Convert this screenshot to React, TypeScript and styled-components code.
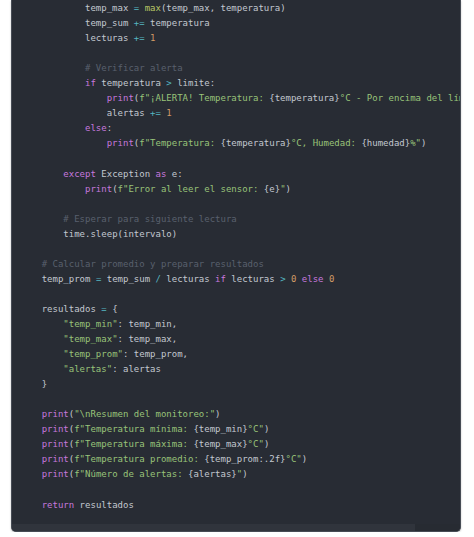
import React from "react";
import styled, { createGlobalStyle } from "styled-components";

const GlobalStyle = createGlobalStyle`
  html, body {
    margin: 0;
    padding: 0;
    background: #ffffff;
  }
`;

type Kind = "t" | "k" | "s" | "n" | "o" | "c" | "f" | "b";

const colors: Record<Kind, string> = {
  t: "#c3c8d0",
  k: "#c678dd",
  s: "#98c379",
  n: "#d19a66",
  o: "#56b6c2",
  c: "#59606d",
  f: "#c678dd",
  b: "#b9c765",
};

const Page = styled.div`
  padding: 0 13px 0 11px;
  width: 450px;
`;

const CodeBlock = styled.div`
  background: #282c34;
  border: 1px solid #474c55;
  border-top: none;
  border-radius: 0 0 5px 5px;
  box-shadow: 0 1px 2px rgba(0, 0, 0, 0.25);
  overflow: hidden;
`;

const Pre = styled.pre`
  margin: 0;
  padding: 1px 0 11px 8px;
  overflow: hidden;
  white-space: pre;
  font-family: "DejaVu Sans Mono", "Liberation Mono", monospace;
  font-size: 9px;
  line-height: 15.06px;
  color: ${colors.t};
`;

const Line = styled.div`
  height: 15.06px;
`;

const Tok = styled.span<{ $kind: Kind }>`
  color: ${(p) => colors[p.$kind]};
`;

const ScrollTrack = styled.div`
  height: 7px;
  background: #272b32;
`;

const ScrollThumb = styled.div<{ $width: string }>`
  height: 100%;
  width: ${(p) => p.$width};
  background: #30343c;
`;

type Seg = [Kind, string];

const ind = (n: number): Seg => ["t", " ".repeat(n)];

const lines: Seg[][] = [
  [ind(12), ["t", "temp_max "], ["o", "="], ["t", " "], ["b", "max"], ["t", "(temp_max, temperatura)"]],
  [ind(12), ["t", "temp_sum "], ["o", "+="], ["t", " temperatura"]],
  [ind(12), ["t", "lecturas "], ["o", "+="], ["t", " "], ["n", "1"]],
  [],
  [ind(12), ["c", "# Verificar alerta"]],
  [ind(12), ["k", "if"], ["t", " temperatura "], ["o", ">"], ["t", " limite:"]],
  [
    ind(16),
    ["f", "print"],
    ["t", "("],
    ["s", 'f"¡ALERTA! Temperatura: '],
    ["t", "{temperatura}"],
    ["s", "°C - Por encima del límite: "],
    ["t", "{limite}"],
    ["s", '°C"'],
    ["t", ")"],
  ],
  [ind(16), ["t", "alertas "], ["o", "+="], ["t", " "], ["n", "1"]],
  [ind(12), ["k", "else"], ["t", ":"]],
  [
    ind(16),
    ["f", "print"],
    ["t", "("],
    ["s", 'f"Temperatura: '],
    ["t", "{temperatura}"],
    ["s", "°C, Humedad: "],
    ["t", "{humedad}"],
    ["s", '%"'],
    ["t", ")"],
  ],
  [],
  [ind(8), ["k", "except"], ["t", " Exception "], ["k", "as"], ["t", " e:"]],
  [ind(12), ["f", "print"], ["t", "("], ["s", 'f"Error al leer el sensor: '], ["t", "{e}"], ["s", '"'], ["t", ")"]],
  [],
  [ind(8), ["c", "# Esperar para siguiente lectura"]],
  [ind(8), ["t", "time.sleep(intervalo)"]],
  [],
  [ind(4), ["c", "# Calcular promedio y preparar resultados"]],
  [
    ind(4),
    ["t", "temp_prom "],
    ["o", "="],
    ["t", " temp_sum "],
    ["o", "/"],
    ["t", " lecturas "],
    ["k", "if"],
    ["t", " lecturas "],
    ["o", ">"],
    ["t", " "],
    ["n", "0"],
    ["t", " "],
    ["k", "else"],
    ["t", " "],
    ["n", "0"],
  ],
  [],
  [ind(4), ["t", "resultados "], ["o", "="], ["t", " {"]],
  [ind(8), ["s", '"temp_min"'], ["t", ": temp_min,"]],
  [ind(8), ["s", '"temp_max"'], ["t", ": temp_max,"]],
  [ind(8), ["s", '"temp_prom"'], ["t", ": temp_prom,"]],
  [ind(8), ["s", '"alertas"'], ["t", ": alertas"]],
  [ind(4), ["t", "}"]],
  [],
  [ind(4), ["f", "print"], ["t", "("], ["s", '"\\nResumen del monitoreo:"'], ["t", ")"]],
  [ind(4), ["f", "print"], ["t", "("], ["s", 'f"Temperatura mínima: '], ["t", "{temp_min}"], ["s", '°C"'], ["t", ")"]],
  [ind(4), ["f", "print"], ["t", "("], ["s", 'f"Temperatura máxima: '], ["t", "{temp_max}"], ["s", '°C"'], ["t", ")"]],
  [
    ind(4),
    ["f", "print"],
    ["t", "("],
    ["s", 'f"Temperatura promedio: '],
    ["t", "{temp_prom:.2f}"],
    ["s", '°C"'],
    ["t", ")"],
  ],
  [ind(4), ["f", "print"], ["t", "("], ["s", 'f"Número de alertas: '], ["t", "{alertas}"], ["s", '"'], ["t", ")"]],
  [],
  [ind(4), ["k", "return"], ["t", " resultados"]],
];

export default function App() {
  return (
    <>
      <GlobalStyle />
      <Page>
        <CodeBlock>
          <Pre>
            {lines.map((segs, i) => (
              <Line key={i}>
                {segs.map(([kind, text], j) => (
                  <Tok key={j} $kind={kind}>
                    {text}
                  </Tok>
                ))}
              </Line>
            ))}
          </Pre>
          <ScrollTrack>
            <ScrollThumb $width="90%" />
          </ScrollTrack>
        </CodeBlock>
      </Page>
    </>
  );
}
